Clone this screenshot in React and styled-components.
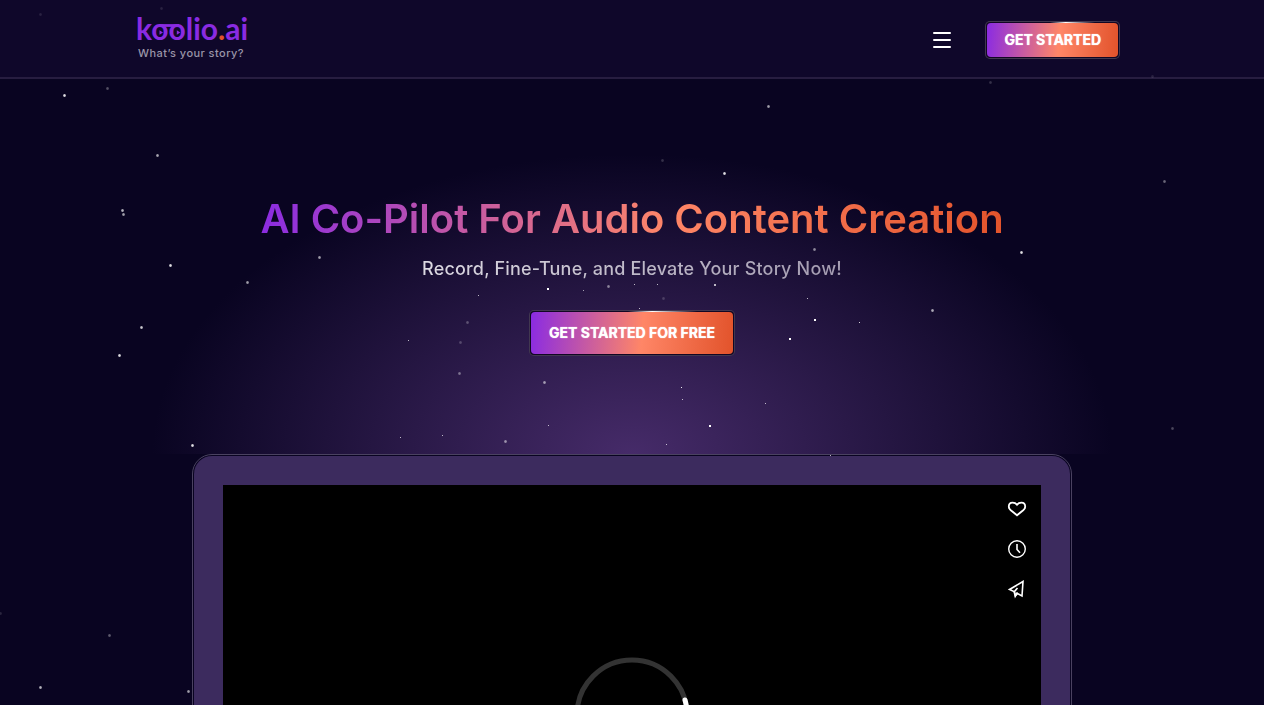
import React from "react";
import styled, { createGlobalStyle, css } from "styled-components";

const GlobalStyle = createGlobalStyle`
  * {
    box-sizing: border-box;
  }
  body {
    margin: 0;
    background: #090421;
    color: #fff;
    font-family: Inter, "Liberation Sans", sans-serif;
    overflow: hidden;
  }
`;

const brandGradient = css`
  background-image: linear-gradient(
    95deg,
    #8a2be2 0%,
    #ff8667 55%,
    #e2532b 100%
  );
`;

const Page = styled.div`
  position: relative;
  height: 100vh;
  overflow: hidden;
`;

const Sky = styled.svg`
  position: absolute;
  top: 0;
  left: 50%;
  width: 1264px;
  height: 705px;
  transform: translateX(-50%);
  pointer-events: none;
`;

const Header = styled.header`
  height: 79px;
  background: #0f072a;
  border-bottom: 2px solid #271d40;
`;

const HeaderInner = styled.div`
  max-width: 1024px;
  height: 100%;
  margin: 0 auto;
  padding: 0 24px 0 16px;
  display: flex;
  align-items: center;
  justify-content: space-between;
`;

const Brand = styled.a`
  display: flex;
  flex-direction: column;
  gap: 4px;
  padding-bottom: 4px;
  color: #8a2be2;
  text-decoration: none;
`;

const Wordmark = styled.span`
  position: relative;
  font: 700 30px/28px Lato, sans-serif;
`;

const Dot = styled.span`
  color: #e2532b;
`;

const Goggles = styled.svg`
  position: absolute;
  left: 15px;
  top: 9px;
`;

const Tagline = styled.span`
  padding-left: 2px;
  color: #9a95a8;
  font-size: 11px;
  font-weight: 500;
  line-height: 14px;
  letter-spacing: 0.04em;
`;

const HeaderActions = styled.div`
  display: flex;
  align-items: center;
  gap: 34px;
  padding-top: 2px;
`;

const MenuButton = styled.button`
  display: flex;
  flex-direction: column;
  gap: 5px;
  padding: 0;
  border: 0;
  background: none;
`;

const MenuLine = styled.span`
  width: 18px;
  height: 2px;
  border-radius: 1px;
  background: #fff;
`;

const ButtonFrame = styled.div`
  position: relative;
  display: inline-block;
  padding: 1px;
  border: 1px solid rgba(255, 255, 255, 0.2);
  border-radius: 5px;
  background: #120724;

  &::before {
    content: "";
    position: absolute;
    top: 0;
    left: 48%;
    width: 34%;
    height: 1px;
    background: linear-gradient(90deg, transparent, #fff 35%, transparent);
  }
`;

const GradientButton = styled.button`
  ${brandGradient}
  display: block;
  height: ${(props) => (props.$large ? "42px" : "34px")};
  padding: ${(props) => (props.$large ? "0 18px" : "0 17px")};
  border: 0;
  border-radius: 4px;
  color: #fff;
  font: 700 14px/20px Inter, sans-serif;
  text-shadow: 0 0 1px #fff;
`;

const Hero = styled.section`
  position: relative;
  height: 375px;
  padding-top: 112px;
  display: flex;
  flex-direction: column;
  align-items: center;
  background: radial-gradient(
    480px 300px at 50% 100%,
    #462b69 0%,
    rgba(70, 43, 105, 0) 100%
  );
`;

const Title = styled.h1`
  ${brandGradient}
  margin: 0;
  background-clip: text;
  -webkit-background-clip: text;
  color: transparent;
  font-size: 40px;
  font-weight: 600;
  line-height: 56px;
`;

const Subtitle = styled.p`
  margin: 10px 0 29px;
  background: linear-gradient(90deg, #dcd9e2, #a39bb0);
  background-clip: text;
  -webkit-background-clip: text;
  color: transparent;
  font-size: 18px;
  font-weight: 500;
  line-height: 24px;
  letter-spacing: 0.01em;
`;

const PlayerFrame = styled.div`
  position: relative;
  width: calc(100% - 384px);
  max-width: 880px;
  margin: 0 auto;
  padding: 1px;
  border: 1px solid #4a4260;
  border-radius: 20px;
  background: #090421;
`;

const PlayerBody = styled.div`
  padding: 29px;
  border-radius: 18px;
  background: #3c2b5e;
`;

const Player = styled.div`
  position: relative;
  aspect-ratio: 16 / 9;
  background: #000;
`;

const PlayerActions = styled.div`
  position: absolute;
  top: 14px;
  right: 14px;
  display: flex;
  flex-direction: column;
  gap: 20px;
`;

const IconButton = styled.button`
  display: block;
  width: 20px;
  height: 20px;
  padding: 0;
  border: 0;
  background: none;
  color: #fff;

  svg {
    display: block;
  }
`;

const Spinner = styled.svg`
  position: absolute;
  left: 50%;
  top: 50%;
  transform: translate(-50%, -50%);
`;

// x, y, size, opacity
const stars = [
  [40, 14, 3, 0.12],
  [161, 8, 3, 0.12],
  [64, 95, 3, 1],
  [107, 88, 3, 0.35],
  [157, 155, 3, 0.75],
  [122, 210, 3, 0.8],
  [123, 214, 3, 0.7],
  [170, 265, 3, 1],
  [247, 282, 3, 0.7],
  [319, 257, 3, 0.7],
  [141, 327, 3, 0.9],
  [119, 355, 3, 1],
  [192, 445, 3, 1],
  [768, 106, 3, 0.7],
  [662, 160, 3, 0.2],
  [724, 173, 3, 1],
  [814, 249, 3, 0.6],
  [1021, 252, 3, 1],
  [1164, 181, 3, 0.45],
  [990, 82, 3, 0.2],
  [1152, 76, 3, 0.12],
  [932, 310, 3, 0.75],
  [1172, 428, 3, 0.3],
  [548, 289, 2, 1],
  [583, 290, 1, 0.6],
  [608, 286, 3, 0.55],
  [634, 284, 1, 0.7],
  [657, 284, 1, 0.7],
  [715, 285, 2, 0.7],
  [663, 298, 3, 0.2],
  [639, 308, 1, 0.7],
  [478, 295, 1, 0.7],
  [467, 322, 3, 0.3],
  [460, 342, 3, 0.25],
  [408, 340, 1, 0.7],
  [459, 373, 3, 0.45],
  [544, 382, 3, 0.65],
  [548, 425, 1, 0.7],
  [505, 441, 3, 0.6],
  [442, 435, 1, 0.7],
  [400, 437, 1, 0.7],
  [681, 387, 1, 0.9],
  [682, 399, 1, 0.7],
  [710, 426, 2, 1],
  [666, 444, 1, 0.7],
  [765, 403, 1, 0.7],
  [790, 339, 2, 1],
  [815, 320, 2, 1],
  [859, 322, 1, 0.8],
  [807, 298, 1, 0.7],
  [830, 455, 1, 0.7],
  [0, 613, 3, 0.15],
  [109, 635, 3, 0.4],
  [40, 687, 3, 0.8],
  [188, 691, 3, 0.7],
];

const Starfield = () => (
  <Sky viewBox="0 0 1264 705" aria-hidden="true">
    {stars.map(([x, y, size, opacity]) => (
      <g key={`${x}-${y}`} fill="#fff" opacity={opacity}>
        {size === 3 && (
          <>
            <rect x={x - 1} y={y - 1} width="3" height="3" opacity="0.35" />
            <rect x={x - 1} y={y} width="3" height="1" opacity="0.5" />
            <rect x={x} y={y - 1} width="1" height="3" opacity="0.6" />
          </>
        )}
        {size === 2 && <rect x={x - 1} y={y - 1} width="2" height="2" />}
        {size === 1 && <rect x={x} y={y} width="1" height="1" />}
      </g>
    ))}
  </Sky>
);

const App = () => {
  return (
    <>
      <GlobalStyle />
      <Page>
        <Header>
          <HeaderInner>
            <Brand href="#">
              <Wordmark>
                koolio<Dot>.</Dot>ai
                <Goggles width="32" height="18" viewBox="0 0 32 18">
                  <path d="M8 2.500H28" stroke="currentColor" strokeWidth="2.800" />
                  <path d="M8.500 7.300l3.500 2.200-3.500 2.200zM25.800 7.300l3.500 2.200-3.500 2.200z" fill="currentColor" />
                </Goggles>
              </Wordmark>
              <Tagline>What’s your story?</Tagline>
            </Brand>
            <HeaderActions>
              <MenuButton aria-label="Open menu">
                <MenuLine />
                <MenuLine />
                <MenuLine />
              </MenuButton>
              <ButtonFrame>
                <GradientButton>GET STARTED</GradientButton>
              </ButtonFrame>
            </HeaderActions>
          </HeaderInner>
        </Header>
        <Hero>
          <Title>AI Co-Pilot For Audio Content Creation</Title>
          <Subtitle>Record, Fine-Tune, and Elevate Your Story Now!</Subtitle>
          <ButtonFrame>
            <GradientButton $large>GET STARTED FOR FREE</GradientButton>
          </ButtonFrame>
        </Hero>
        <PlayerFrame>
          <PlayerBody>
            <Player>
              <PlayerActions>
                <IconButton aria-label="Like">
                  <svg width="20" height="20" viewBox="0 0 20 20" fill="none" stroke="currentColor" strokeWidth="1.800">
                    <path d="M10 16.300L3.800 11.300C2.300 10 1.800 8.700 1.800 7.400C1.800 5 3.500 3.600 5.600 3.600C7.500 3.600 9 4.400 10 5.700C11 4.400 12.500 3.600 14.400 3.600C16.500 3.600 18.200 5 18.200 7.400C18.200 8.700 17.700 10 16.200 11.300Z" />
                  </svg>
                </IconButton>
                <IconButton aria-label="Watch later">
                  <svg width="20" height="20" viewBox="0 0 20 20" fill="none" stroke="currentColor">
                    <circle cx="10" cy="10" r="8.300" strokeWidth="1.400" />
                    <path d="M10 5V10.500L13 13.800" strokeWidth="1.600" />
                  </svg>
                </IconButton>
                <IconButton aria-label="Share">
                  <svg width="20" height="20" viewBox="0 0 20 20" fill="none" stroke="currentColor" strokeWidth="1.600">
                    <path d="M16 2.500L2.500 10.500L7 12.500L8.300 17L10.500 14.500L15 17Z" />
                    <path d="M10.500 9L7.500 12.500L8.300 17L10.300 13.300" />
                  </svg>
                </IconButton>
              </PlayerActions>
              <Spinner width="116" height="116" viewBox="0 0 116 116" fill="none" strokeWidth="5">
                <circle cx="58" cy="58" r="55" stroke="#333" />
                <path d="M111 43A55 55 0 0 1 111 73" stroke="#fff" strokeLinecap="round" />
              </Spinner>
            </Player>
          </PlayerBody>
        </PlayerFrame>
        <Starfield />
      </Page>
    </>
  );
};

export default App;
